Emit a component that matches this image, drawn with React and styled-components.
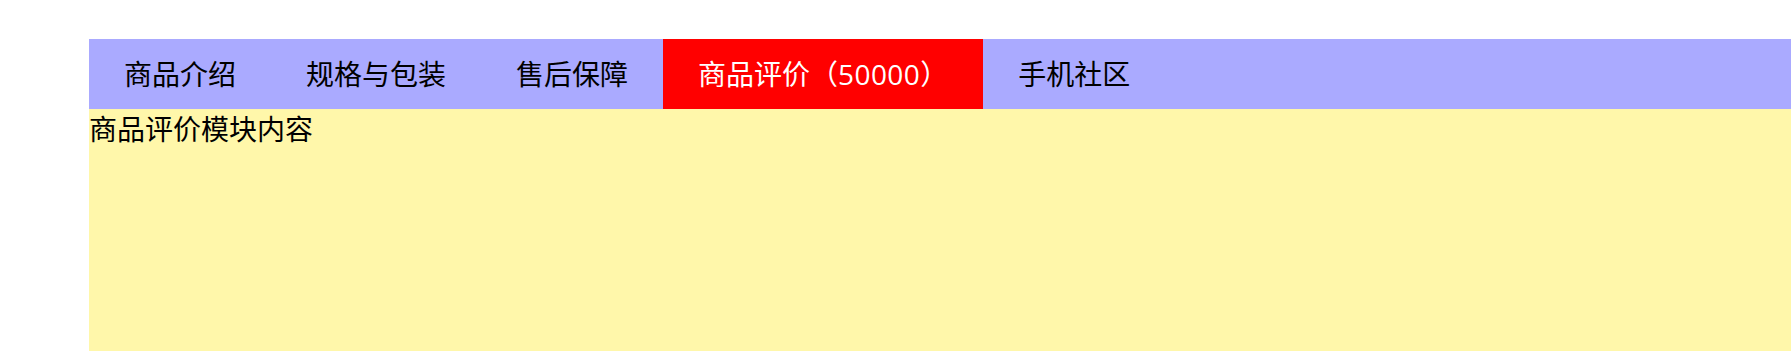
import React from "react";
import styled, { createGlobalStyle } from "styled-components";

const GlobalStyle = createGlobalStyle`
  html, body {
    margin: 0;
    padding: 0;
    overflow: hidden;
    background: #fff;
  }
  body {
    font-family: "Open Sans", "Noto Sans CJK SC", sans-serif;
  }
`;

const Page = styled.div`
  padding: 39px 0 0 89px;
`;

const Box = styled.div`
  width: 100%;
`;

const TabBar = styled.ul`
  display: flex;
  margin: 0;
  padding: 0;
  list-style: none;
  height: 70px;
  background-color: #aaaaff;
`;

const Tab = styled.li`
  padding: 0 35px;
  line-height: 71px;
  font-size: 28px;
  color: ${(p) => (p.$active ? "#ffffff" : "#000000")};
  background-color: ${(p) => (p.$active ? "#ff0000" : "transparent")};
  cursor: pointer;
`;

const Count = styled.span`
  letter-spacing: 0.4px;
`;

const Panel = styled.div`
  height: 242px;
  background-color: #fff7aa;
  font-size: 28px;
  line-height: 40px;
  color: #000;
`;

const tabs = [
  { label: "商品介绍" },
  { label: "规格与包装" },
  { label: "售后保障" },
  { label: "商品评价", count: 50000 },
  { label: "手机社区" },
];

const App = () => {
  const [current, setCurrent] = React.useState(3);
  return (
    <Page>
      <GlobalStyle />
      <Box>
        <TabBar>
          {tabs.map((t, i) => (
            <Tab key={t.label} $active={i === current} onClick={() => setCurrent(i)}>
              {t.label}
              {t.count != null && (
                <>
                  （<Count>{t.count}</Count>）
                </>
              )}
            </Tab>
          ))}
        </TabBar>
        <Panel>商品评价模块内容</Panel>
      </Box>
    </Page>
  );
};

export default App;
